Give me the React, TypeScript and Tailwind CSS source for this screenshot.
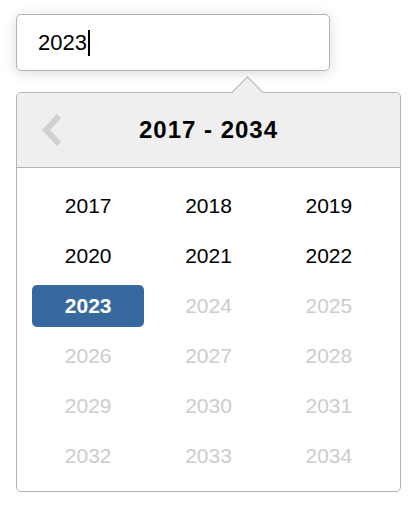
import React from 'react';

const years = Array.from({ length: 18 }, (_, i) => 2017 + i);
const selected = 2023;

export default function App() {
  return (
    <div className="w-[420px] h-[512px] bg-white relative" style={{ fontFamily: '"Liberation Sans", Arial, sans-serif' }}>
      <div className="pt-[14px] pl-[16px]">
        {/* Input */}
        <div className="w-[314px] h-[57px] border border-[#b4b4b4] rounded-[5px] bg-white shadow-[0_2px_14px_rgba(0,0,0,0.14)] flex items-center pl-[21px]">
          <span className="text-[22px] text-black leading-none">2023</span>
          <span className="inline-block w-[2px] h-[26px] bg-black ml-[1px]" />
        </div>

        {/* Popup */}
        <div className="relative mt-[21px] w-[385px] border border-[#b4b4b4] rounded-[5px] bg-white">
          <div className="absolute -top-[12px] left-[219px] w-[23px] h-[23px] rotate-45 bg-[#efefef] border-l border-t border-[#b4b4b4]" />
          <div className="relative h-[75px] bg-[#efefef] border-b border-[#b4b4b4] rounded-t-[5px] flex items-center justify-center">
            <svg className="absolute left-[24px] top-[20px]" width="22" height="34" viewBox="0 0 22 34">
              <path d="M18 3 L5 17 L18 31" fill="none" stroke="#d0d0d0" strokeWidth="6" strokeLinejoin="miter" />
            </svg>
            <span className="text-[24px] font-bold text-black tracking-[1px]">2017 - 2034</span>
          </div>
          <div className="grid grid-cols-3 px-[11px] pt-[13px] pb-[10px]">
            {years.map((y) => {
              const isSelected = y === selected;
              const disabled = y > selected;
              return (
                <div key={y} className="h-[50px] p-[4px]">
                  <div
                    className={`h-full w-full rounded-[5px] flex items-center justify-center text-[21px] ${
                      isSelected
                        ? 'bg-[#37699f] text-white font-bold'
                        : disabled
                        ? 'text-[#cccccc]'
                        : 'text-black'
                    }`}
                  >
                    {y}
                  </div>
                </div>
              );
            })}
          </div>
        </div>
      </div>
    </div>
  );
}
